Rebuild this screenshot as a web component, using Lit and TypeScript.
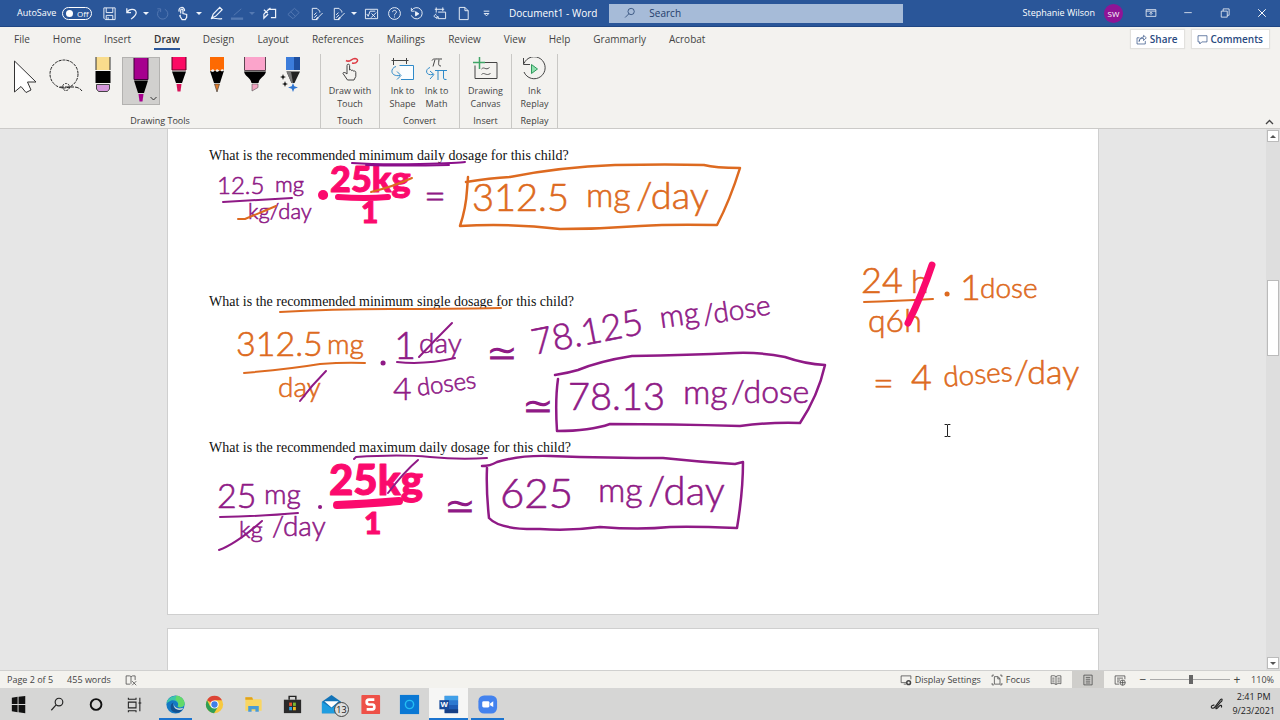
import { LitElement, html, css, svg } from "lit";
import { customElement } from "lit/decorators.js";
import { classMap } from "lit/directives/class-map.js";

const ORANGE = "#dd6a20";
const PURPLE = "#8f1a86";
const PINK = "#fb0a6d";

type Glyph = { t: string; x: number; y: number; s: number; c: string; r?: number; bold?: boolean };
type Stroke = { d: string; c: string; w: number };

const words: Glyph[] = [
  { t: "12.5", x: 217, y: 194, s: 24, c: PURPLE },
  { t: "mg", x: 275, y: 192, s: 22, c: PURPLE },
  { t: "kg/day", x: 248, y: 219, s: 22, c: PURPLE },
  { t: "25kg", x: 330, y: 192, s: 36, c: PINK, bold: true },
  { t: "1", x: 361, y: 223, s: 30, c: PINK, bold: true },
  { t: "=", x: 424, y: 209, s: 38, c: PURPLE },
  { t: "312.5", x: 472, y: 211, s: 38, c: ORANGE },
  { t: "mg", x: 586, y: 207, s: 34, c: ORANGE },
  { t: "/day", x: 636, y: 209, s: 38, c: ORANGE },

  { t: "312.5", x: 236, y: 356, s: 34, c: ORANGE },
  { t: "mg", x: 327, y: 354, s: 28, c: ORANGE },
  { t: "day", x: 278, y: 397, s: 28, c: ORANGE },
  { t: "1", x: 394, y: 359, s: 38, c: PURPLE },
  { t: "day", x: 419, y: 353, s: 28, c: PURPLE },
  { t: "4", x: 393, y: 400, s: 32, c: PURPLE },
  { t: "doses", x: 418, y: 396, s: 24, c: PURPLE, r: -8 },
  { t: "≃", x: 486, y: 366, s: 38, c: PURPLE },
  { t: "78.125", x: 534, y: 355, s: 36, c: PURPLE, r: -11 },
  { t: "mg", x: 661, y: 328, s: 30, c: PURPLE, r: -8 },
  { t: "/dose", x: 704, y: 325, s: 28, c: PURPLE, r: -9 },
  { t: "≃", x: 522, y: 419, s: 38, c: PURPLE },
  { t: "78.13", x: 568, y: 410, s: 38, c: PURPLE },
  { t: "mg", x: 683, y: 404, s: 34, c: PURPLE },
  { t: "/dose", x: 731, y: 403, s: 32, c: PURPLE },

  { t: "24", x: 861, y: 293, s: 36, c: ORANGE },
  { t: "h", x: 911, y: 293, s: 32, c: ORANGE },
  { t: "q6h", x: 868, y: 332, s: 32, c: ORANGE },
  { t: "1", x: 960, y: 300, s: 36, c: ORANGE },
  { t: "dose", x: 980, y: 298, s: 28, c: ORANGE },
  { t: "=", x: 873, y: 396, s: 36, c: ORANGE },
  { t: "4", x: 911, y: 390, s: 36, c: ORANGE },
  { t: "doses", x: 944, y: 387, s: 28, c: ORANGE, r: -5 },
  { t: "/day", x: 1014, y: 384, s: 34, c: ORANGE },

  { t: "25", x: 217, y: 508, s: 34, c: PURPLE },
  { t: "mg", x: 264, y: 504, s: 28, c: PURPLE },
  { t: "kg", x: 239, y: 538, s: 24, c: PURPLE },
  { t: "/day", x: 272, y: 536, s: 28, c: PURPLE },
  { t: "25kg", x: 329, y: 495, s: 42, c: PINK, bold: true },
  { t: "1", x: 364, y: 534, s: 30, c: PINK, bold: true },
  { t: "≃", x: 444, y: 519, s: 38, c: PURPLE },
  { t: "625", x: 500, y: 508, s: 42, c: PURPLE },
  { t: "mg", x: 598, y: 502, s: 34, c: PURPLE },
  { t: "/day", x: 648, y: 505, s: 40, c: PURPLE },
];

const strokes: Stroke[] = [
  { d: "M352 163Q380 165 420 164T465 162", c: "#8a0f8a", w: 2 },
  { d: "M366 165Q400 166 449 165", c: "#8a0f8a", w: 2 },
  { d: "M223 202Q260 200 292 198", c: PURPLE, w: 2 },
  { d: "M238 219L245 219Q262 212 276 206", c: ORANGE, w: 2 },
  { d: "M323 195h0.1", c: PINK, w: 10 },
  { d: "M338 197Q365 199 388 197", c: PINK, w: 6 },
  { d: "M371 192Q392 187 412 178", c: ORANGE, w: 2 },
  { d: "M466 182Q490 178 510 177Q560 167 615 165Q670 164 704 165Q715 168 740 168Q730 200 717 225Q670 224 640 226Q600 229 560 229Q510 223 460 226Q466 208 467 190L468 177", c: ORANGE, w: 2.5 },

  { d: "M280 312Q330 309 390 309T501 308", c: ORANGE, w: 2 },
  { d: "M244 373Q290 369 320 364Q345 362 365 363", c: ORANGE, w: 2 },
  { d: "M300 401Q312 385 326 371", c: PURPLE, w: 2 },
  { d: "M383 363h0.1", c: PURPLE, w: 5 },
  { d: "M419 357Q436 339 452 323", c: PURPLE, w: 2 },
  { d: "M397 362Q425 365 455 358", c: PURPLE, w: 2 },
  { d: "M555 375Q568 373 578 370Q600 361 632 356Q690 355 735 353Q760 352 785 357Q805 364 825 365Q818 396 800 423Q770 422 740 426Q670 424 610 424Q590 431 557 431Q555 400 558 379", c: PURPLE, w: 2.5 },

  { d: "M864 302Q895 301 933 299", c: ORANGE, w: 2 },
  { d: "M932 265Q922 295 908 323", c: PINK, w: 7 },
  { d: "M947 294h0.1", c: ORANGE, w: 5 },

  { d: "M354 459l2 -2Q400 454 430 457T487 458", c: PURPLE, w: 2 },
  { d: "M220 517Q265 516 298 513", c: PURPLE, w: 2 },
  { d: "M219 550Q236 544 262 521", c: PURPLE, w: 2 },
  { d: "M320 507h0.1", c: PURPLE, w: 4 },
  { d: "M337 505Q365 504 399 501", c: PINK, w: 8 },
  { d: "M388 493Q404 472 418 460", c: PURPLE, w: 2 },
  { d: "M482 466Q490 466 497 462Q520 455 550 456Q610 458 663 458Q700 462 735 464L743 462Q743 492 737 528Q690 526 670 527Q640 530 600 527Q570 531 540 529Q500 530 489 518Q486 490 487 468", c: PURPLE, w: 2.5 },
];

const icon = (body: unknown, size = 16, box = 16) =>
  html`<svg class="ico" width=${size} height=${size} viewBox="0 0 ${box} ${box}" aria-hidden="true">${body}</svg>`;

const chevron = svg`<path d="M1 3l3 3 3-3z" fill="currentColor" stroke="none"/>`;
const penPage = svg`<path d="M9 14.500H3.500V2.500H8.500L11.500 5.500V7M5.500 9.500L8 7M5.500 12.500L8.500 9.500M8.500 13.500L14.500 7.500M7.500 14.500L9 12l1 1z"/>`;
const inkShape = svg`<path d="M3 3.500H13M4.500 1.500V7M11.500 1.500V5.500M6.500 6.500H14.500V13.500H6.500V11M4.500 8.500C1 10 2 13 5.500 12M4.500 10l2 2-2 2"/>`;
const replay = svg`<path d="M3 4.500A6 6 0 1 1 2.500 10M2.500 2V5.500H6"/><path d="M7 6l3.500 2.300L7 10.500z" fill="currentColor"/>`;
const touch = svg`<path d="M5 8V4.500a1.200 1.200 0 0 1 2.400 0V8l4 1v3l-1.500 2.500H6.500L4 10.500 5 9.500M3.500 6A3 3 0 1 1 9 5.500" stroke-width="1.300"/>`;

const quick: Array<[string, unknown, string]> = [
  ["Save", svg`<path d="M2 2H14V14.500H3.500L2 13zM4.500 2V7H11.500V2M4.500 14.500V10H11.500V14.500M6.500 12v2.500"/>`, ""],
  ["Undo", svg`<path d="M3 2.500V7H7.500M3 7C6 2 12.500 3 13 7C13.200 9.500 11 11.500 7.500 14" stroke-width="1.300"/>`, ""],
  ["Undo history", chevron, "drop"],
  ["Repeat", svg`<path d="M10.500 3.500A5.500 5.500 0 1 1 5 4M2.500 3H6V6.500"/>`, "dim"],
  ["Touch mode", touch, ""],
  ["Touch options", chevron, "drop"],
  ["Pen", svg`<path d="M2 13.500C6 12 8 14.500 14 13.500M3 12.500L4.500 8.500 11.500 1.500 14 4 7 11z" stroke-width="1.300"/>`, ""],
  ["Ink color", svg`<path d="M1 13.500H14" stroke-width="2.500"/><path d="M4 10L12 3"/>`, "dim"],
  ["Ink color options", chevron, "drop dim"],
  ["Lasso", svg`<path d="M6 3.500H14.500V12.500H9.500M2 8.500L9 2M2 4L6 7.500M2 8.500V13L6.500 8.500" stroke-width="1.300"/>`, ""],
  ["Eraser", svg`<path d="M2 9L9 2.500 14 7 7.500 13.500zM5 6l5 5"/>`, "dim"],
  ["Ink editor", penPage, ""],
  ["Ink gestures", penPage, ""],
  ["Ink gesture options", chevron, "drop"],
  ["Ink equation", svg`<path d="M1.500 3.500H14.500V13.500H1.500zM3 8.500l1.500 2.500L6.500 5.500H12M8 8l4 4M13 7L7.500 12.500"/>`, ""],
  ["Help", svg`<circle cx="8" cy="8" r="6.300"/><path d="M6 6.500C6 4 10 4 10 6.500C10 8 8 8 8 10M8 11.200v1"/>`, ""],
  ["Ink replay", replay, ""],
  ["Ink to shape", inkShape, ""],
  ["New", svg`<path d="M3.500 1.500H9.500L13 5V14.500H3.500zM9.500 1.500V5H13"/>`, ""],
  ["Customize toolbar", svg`<path d="M5 5.500H11M5.500 8l2.500 2.500L10.500 8z"/>`, ""],
];

const tabs = ["File", "Home", "Insert", "Draw", "Design", "Layout", "References", "Mailings", "Review", "View", "Help", "Grammarly", "Acrobat"];

const tool = (body: unknown, w = 38) =>
  html`<svg class="toolart" width=${w} height="48" viewBox="0 0 ${w} 48" aria-hidden="true">${body}</svg>`;

const tools: Array<[string, unknown]> = [
  ["Eraser", svg`<path d="M12 0H26V13H12z" fill="#f9dc8c"/><path d="M12 0V13M26 0V13" stroke="#333"/><path d="M11.500 14H26.500V26H11.500z" fill="#000"/><path d="M12.500 27.500H25.500V32l-2 2.500H14.500l-2-2.500z" fill="#d597dc" stroke="#444"/>`],
  ["Purple pen", svg`<path d="M12 0H26V22H12z" fill="#a6008e"/><path d="M12 0V22.500H26V0" fill="none" stroke="#3a0033"/><path d="M12 23.500H26L22 36H16z" fill="#000"/><path d="M16.500 37H21.500L20.500 44.500H17.500z" fill="#a6008e"/><path d="M28.500 40l3 3 3-3" fill="none" stroke="#333"/>`],
  ["Pink pen", svg`<path d="M12 0H26V13H12z" fill="#fb0a64"/><path d="M12 0V13H26V0" fill="none" stroke="#5a0022"/><path d="M12 14.500H26L22 26H16z" fill="#000"/><path d="M16.500 27H21.500L20.500 34.500H17.500z" fill="#d8145a"/>`],
  ["Orange pencil", svg`<path d="M12 0H26V13l-2-1-2 2-3-2-2 2-2-2-3 2z" fill="#fd6a02"/><path d="M12 14l3 1 2-1.500 2 1.500 3-1.500 2 1 2-1L22 26H16z" fill="#000"/><path d="M16.500 27H21.500L19 35z" fill="#dd7a2a" stroke="#333" stroke-width=".6"/>`],
  ["Pink highlighter", svg`<path d="M8.500 0H29.500V13H8.500z" fill="#fba4cb"/><path d="M8.500 0V13.500H29.500V0" fill="none" stroke="#5b4650"/><path d="M8 14.500H30C29 20 23.500 20 22.500 26H15.500C14.500 20 9 20 8 14.500z" fill="#000"/><path d="M16 27H22V30.500L16 34z" fill="#f0a4c0" stroke="#555" stroke-width=".6"/>`],
  ["Galaxy pen", svg`<path d="M12 0H26V13H12z" fill="#3c7ddb"/><path d="M20 0H26V13H20z" fill="#1f4f9e"/><path d="M12.500 14.500H26L20.500 26H17.500z" fill="#222"/><path d="M12.500 14.500H17L19 26H17.500z" fill="#777"/><path d="M19 26l1.300 3.200L24 30.500l-3.700 1.300L19 35l-1.300-3.200L14 30.500l3.700-1.300z" fill="#2e74d0"/><path d="M9 17l.8 2.200 2.200.8-2.200.8L9 23l-.8-2.200L6 20l2.200-.8zM11 24l.8 2.200 2.200.8-2.200.8L11 30l-.8-2.200L8 27l2.200-.8z" fill="#111"/>`],
];

const bigShape = svg`<path d="M1.500 3.500H18.500M3.500 1V8M16.500 1V7" stroke="#444"/><path d="M9.500 8.500H23.500V22.500H11" stroke="#2f8ac9" fill="#fafdff"/><path d="M6 9.500C0 11 0 20 10 18.500M7 14.500l4 4-4 4" stroke="#2f8ac9"/>`;
const bigMath = svg`<path d="M8 3.500C9 1.500 10 2 18 2M11 2.500L9 9.500M15 2.500C14.500 7 14 9 17 9" stroke="#444"/><path d="M6 10.500C1 12 1 19 9 17.500M6 14l4 3.500-4 4.500M11 13.500H23M14 14V23M19.500 14V21Q19.500 23 22.500 22.500" stroke="#2f8ac9"/>`;
const bigCanvas = svg`<path d="M8 5.500H24V21.500H2V8.500" stroke="#444"/><path d="M8.500 12c3-3 4 2 8-1.500M8.500 17.500c3-3 4 2 9-1" stroke="#555"/><path d="M6.500 0V12M0 5.500H12" stroke="#3fa566" stroke-width="1.500"/>`;
const bigReplay = svg`<path d="M2 6.500A11 11 0 1 1 2 15M1.500 1V7.500H8" stroke="#444"/><path d="M9.500 7.500l6 4.500-6 4.500z" fill="#8fe0ae" stroke="#2f9a5c"/>`;
const bigTouch = svg`<path d="M8 3.500C12 6 13 1.500 17 1.500C22 2 19 7 14 6" stroke="#dd3b44" stroke-width="1.500"/><path d="M9 16V8.500a1.300 1.300 0 0 1 2.600 0V13c1-1 2 0 2 .6c1-.8 2 0 2 .6c1-.6 2.200 0 2.200 1.200v4L16 23H9.500L5 16.500C5 15 7 15 9 17z" stroke="#444"/>`;

const apps: Array<[string, unknown, string]> = [
  ["Start", svg`<path d="M4 5l6-1v7.500H4zM11 3.800L18 3v8.500h-7zM4 12.500h6V20l-6-1zM11 12.500h7V21l-7-1z" fill="#111"/>`, ""],
  ["Search", svg`<g fill="none" stroke="#222" stroke-width="1.200"><circle cx="12.500" cy="9.500" r="4"/><path d="M9.500 12.500L4.500 18"/></g>`, ""],
  ["Cortana", svg`<circle cx="10.500" cy="12" r="5.600" fill="none" stroke="#111" stroke-width="2"/>`, ""],
  ["Task view", svg`<path d="M3 6.500h9M3 18.500h9M3.500 9.500h8v6h-8zM15.500 5v14M14 10.500h3M3.500 5v2M11.500 5v2M3.500 18v2M11.500 18v2" fill="none" stroke="#222" stroke-width="1.100"/>`, ""],
  ["Edge", svg`<circle cx="12" cy="12" r="9.500" fill="#1479c4"/><path d="M2.600 11C4 1 20 0 21.500 11C21.500 15 16 16 14 14C17 10 11 6 7 8C5 9 3 10 2.600 11z" fill="#3ec7a8"/><path d="M13 2.600C18 3 21.500 7 21.500 11C21.500 14.500 17 15.500 14.500 14.300C16 11 14 8 12 7z" fill="#63d968"/><path d="M10 10C8 13 11 19 19 17.500C16 22 8 21.500 7 16C6.500 12.500 8 10.500 10 10z" fill="#14508f"/><path d="M10.500 10.500C9.500 14 13 17.500 20 15.500L19 17.300C13 19 9 15 10.500 10.500z" fill="#d6d6d5"/>`, "open"],
  ["Chrome", svg`<circle cx="12" cy="12" r="9" fill="#f7c93e"/><path d="M12 12L4.200 7.500A9 9 0 0 1 19.800 7.500H12z" fill="#dc4437"/><path d="M12 12L7.500 14 4.200 7.500A9 9 0 0 0 11.500 21L15.500 14.500z" fill="#2f9e55"/><circle cx="12" cy="12" r="4.300" fill="#fff"/><circle cx="12" cy="12" r="3.300" fill="#3f7fe8"/>`, ""],
  ["File Explorer", svg`<path d="M3.500 4.500h7l1.500 2H19a1.500 1.500 0 0 1 1.500 1.500v10.500H3.500z" fill="#f9d662"/><path d="M3.500 4.500h7l1 2.500h-8z" fill="#e0a21d"/><path d="M6.500 19.500v-6h11v6h-3.500V17h-4v2.500z" fill="#4a9bd6"/>`, ""],
  ["Store", svg`<path d="M8.500 7V3.500h7V7" fill="none" stroke="#222" stroke-width="1.500"/><path d="M3 7h18v14H3z" fill="#2b2a2a"/><path d="M8.500 10h3v3.500h-3z" fill="#e8542e"/><path d="M12.500 10h3v3.500h-3z" fill="#7db82e"/><path d="M8.500 14.500h3V18h-3z" fill="#2ea2e0"/><path d="M12.500 14.500h3V18h-3z" fill="#f3b921"/>`, ""],
  ["Mail", svg`<path d="M2 9L12 2l10 7v12H2z" fill="#1374b8"/><path d="M4.500 8.500h15L12 15z" fill="#fff"/><path d="M2 9l10 7 10-7v12H2z" fill="#1f9de0"/>`, "mail"],
  ["Snagit", svg`<rect x="2.500" y="2" width="19.500" height="20" rx="1" fill="#ee5148"/><path d="M16 7H10.500Q8 7 8 9.500Q8 12 10.500 12H14Q16 12 16 14.500Q16 17 14 17H8" fill="none" stroke="#fff" stroke-width="2.800"/>`, ""],
  ["Alexa", svg`<path d="M2 2h20v20h-20z" fill="#0a78d4"/><circle cx="12" cy="12" r="4.300" fill="none" stroke="#25bff2" stroke-width="1.500"/>`, ""],
  ["Word", svg`<path d="M8 3h14v18H8z" fill="#1e5bb5"/><path d="M8 3h14v5H8z" fill="#41a0e8"/><path d="M8 8h14v4.500H8z" fill="#2c78d0"/><path d="M8 17h14v4H8z" fill="#163f86"/><path d="M2.500 7.500h10v9.500h-10z" fill="#17499a"/><text x="7.500" y="15" text-anchor="middle" font-size="8" font-weight="700" fill="#fff">W</text>`, "open current"],
  ["Zoom", svg`<rect x="2.500" y="2.500" width="19.500" height="19" rx="6" fill="#4382ee"/><rect x="6.500" y="8.500" width="7.500" height="6.500" rx="1.500" fill="#fff"/><path d="M14.700 11l3.300-2.300v6L14.700 12.700z" fill="#fff"/>`, "open"],
];

@customElement("app-root")
export class AppRoot extends LitElement {
  static styles = css`
    :host {
      display: flex;
      flex-direction: column;
      height: 100vh;
      overflow: hidden;
      background: #e6e6e6;
      color: #444;
      font: 10px/14px "Open Sans", "Noto Sans", sans-serif;
    }
    * { box-sizing: border-box; }
    button, input { font: inherit; color: inherit; border: 0; background: none; padding: 0; margin: 0; }
    button { display: flex; align-items: center; justify-content: center; white-space: nowrap; }
    svg { flex: none; display: block; }
    .ico { fill: none; stroke: currentColor; }

    .title { display: flex; align-items: center; height: 27px; flex: none; background: #2a5699; color: #fff; border-bottom: 1px solid #1f4684; }
    .auto { display: flex; align-items: center; gap: 6px; width: 97px; padding-left: 17px; font-size: 9px; flex: none; }
    .toggle { width: 30px; height: 13px; border: 1px solid #fff; border-radius: 7px; font-size: 8px; line-height: 11px; gap: 4px; }
    .knob { width: 7px; height: 7px; border-radius: 50%; background: #fff; }
    .quick { display: grid; flex: none; grid-template-columns: 24px 20px 10px 22px 20px 12px 22px 20px 10px 24px 24px 22px 22px 10px 24px 22px 22px 24px 24px 22px; color: #eef3fb; }
    .dim { color: #5479b2; }
    .name { padding: 0 12px; white-space: nowrap; }
    .search { display: flex; align-items: center; gap: 13px; flex: 0 1 294px; min-width: 0; height: 19px; padding-left: 15px; background: #a6bbd8; color: #1e3c6b; }
    .search input { flex: 1; min-width: 0; outline: 0; }
    .search input::placeholder { color: #1e3c6b; opacity: 1; }
    .user { display: flex; align-items: center; gap: 9px; margin-left: auto; white-space: nowrap; font-size: 9px; }
    .avatar { width: 19px; height: 19px; border-radius: 50%; background: #8f1496; font-size: 8px; line-height: 19px; text-align: center; }
    .window { display: grid; grid-template-columns: repeat(4, 37px); padding-left: 9px; }

    .tabs { display: flex; align-items: flex-start; height: 27px; flex: none; background: #f3f2ef; padding: 3px 11px 0 14px; }
    .tablist { display: flex; gap: 23px; margin-right: auto; }
    .tab { height: 20px; border-bottom: 2px solid transparent; }
    .tab.on { border-color: #2a5699; color: #333; font-weight: 600; }
    .actions { display: flex; gap: 8px; color: #2a4a80; font-weight: 600; }
    .actions button { height: 18px; gap: 3px; padding: 0 6px 0 5px; background: #fff; box-shadow: 0 0 1px 1px #e2e1de; }

    .ribbon { display: flex; height: 75px; flex: none; background: #f3f2ef; border-bottom: 1px solid #cbcac8; font-size: 9px; line-height: 13px; }
    .group { display: flex; flex-direction: column; align-items: center; justify-content: space-between; height: 74px; padding: 3px 5px 0; border-right: 1px solid #c9c8c5; }
    .group.draw { width: 321px; padding: 3px 4px 0; align-items: stretch; }
    .group.touch { width: 59px; }
    .group.convert { width: 80px; }
    .group.insert { width: 52px; }
    .group.replay { width: 46px; }
    .caption { text-align: center; line-height: 14px; white-space: nowrap; color: #3a3a3a; }
    .row { display: flex; justify-content: center; }
    .tools { display: flex; }
    .pick { width: 40px; height: 48px; }
    .pen { width: 38px; height: 48px; }
    .pen.on { background: #d1d0ce; outline: 1px solid #b3b2b0; outline-offset: -1px; }
    .big { flex-direction: column; gap: 2px; min-width: 34px; white-space: pre-line; }
    .collapse { margin: auto 6px 1px auto; }

    .work { display: flex; flex: 1; min-height: 0; overflow: hidden; }
    .pages { flex: 1; min-width: 0; display: flex; flex-direction: column; align-items: center; gap: 13px; overflow: hidden; }
    .sheet { position: relative; flex: none; width: 100%; max-width: 932px; height: 486px; padding: 18px 41px; background: #fff; border: 1px solid #cfcfcf; border-top: 0; }
    .sheet.next { border-top: 1px solid #cfcfcf; }
    .sheet p { margin: 0 0 128px; font: 14px/18px "Liberation Serif", serif; color: #111; }
    .ink { position: absolute; top: 0; left: -1px; font-family: Lato, sans-serif; font-weight: 300; }
    .ink path { fill: none; stroke-linecap: round; stroke-linejoin: round; }
    .ink .bold { font-weight: 900; }

    .scroll { display: flex; flex-direction: column; width: 14px; flex: none; padding: 1px; background: #dedede; }
    .scroll button { height: 12px; background: #fff; border: 1px solid #bbb; color: #555; }
    .track { display: grid; flex: 1; grid-template-rows: 138fr 76fr 301fr; }
    .thumb { grid-row: 2; background: #fff; border: 1px solid #bbb; }

    .status { display: flex; align-items: center; justify-content: space-between; height: 18px; flex: none; background: #f3f2ee; border-top: 1px solid #d0d0cf; font-size: 9px; padding: 0 6px 0 7px; }
    .side { display: flex; align-items: center; height: 100%; }
    .side.left { gap: 14px; }
    .side.right button { gap: 3px; height: 17px; }
    .side.right .label { margin-right: 10px; }
    .side.right .view { width: 32px; }
    .side.right .view.on { background: #cfcecb; }
    .side.right .step { width: 14px; font-size: 12px; }
    .zoom { appearance: none; width: 80px; height: 12px; background: linear-gradient(#aaa, #aaa) center / 100% 1px no-repeat; }
    .zoom::-webkit-slider-thumb { appearance: none; width: 4px; height: 9px; background: #666; }
    .percent { width: 30px; text-align: right; }

    .taskbar { display: flex; align-items: center; height: 32px; flex: none; background: #d6d6d5; }
    .app { position: relative; width: 39px; height: 32px; }
    .app.open::after { content: ""; position: absolute; left: 3px; right: 3px; bottom: 0; height: 2px; background: #1c74cf; }
    .app.current { background: #f6f6f5; }
    .app.current::after { left: 0; right: 0; }
    .badge { position: absolute; right: 2px; bottom: 3px; width: 15px; height: 15px; border: 1px solid #444; border-radius: 50%; background: #dededd; color: #111; font-size: 9px; line-height: 13px; text-align: center; }
    .tray { display: flex; align-items: center; gap: 8px; margin-left: auto; padding-right: 5px; color: #222; text-align: center; font-size: 9px; line-height: 14px; }
  `;

  private renderTitle() {
    return html`<header class="title">
      <div class="auto"><span>AutoSave</span><button class="toggle" role="switch" aria-checked="false" aria-label="AutoSave"><span class="knob"></span>Off</button></div>
      <nav class="quick" aria-label="Quick access">
        ${quick.map(([label, art, cls]) => html`<button class=${cls} aria-label=${label}>${cls.includes("drop") ? icon(art, 8, 8) : icon(art, 15)}</button>`)}
      </nav>
      <span class="name">Document1 - Word</span>
      <label class="search" aria-label="Search">${icon(svg`<circle cx="9.500" cy="6" r="4.200"/><path d="M6.500 9L1.500 14"/>`, 12)}<input type="text" placeholder="Search" /></label>
      <div class="user"><span>Stephanie Wilson</span><span class="avatar">SW</span></div>
      <div class="window">
        <button aria-label="Ribbon display options">${icon(svg`<path d="M1.500 3.500H14.500V12.500H1.500zM1.500 5.500H14.500M8 11V7M6 9l2-2 2 2"/>`, 12)}</button>
        <button aria-label="Minimize">${icon(svg`<path d="M3 7.500H13"/>`, 12)}</button>
        <button aria-label="Restore">${icon(svg`<path d="M3 5.500H11V13.500H3zM5.500 5.500V2.500H13.500V11H11"/>`, 12)}</button>
        <button aria-label="Close">${icon(svg`<path d="M3 3L13 13M13 3L3 13" stroke-width="1.300"/>`, 12)}</button>
      </div>
    </header>`;
  }

  private renderTabs() {
    return html`<div class="tabs">
      <nav class="tablist">${tabs.map((t) => html`<button class=${classMap({ tab: true, on: t === "Draw" })}>${t}</button>`)}</nav>
      <div class="actions">
        <button>${icon(svg`<path d="M5 5.500H1.500V14.500H13.500V10M4.500 11C5 7 8 6 11 6.500V9.500L15 5.500 11 2V4.500C7 4.500 4.500 7 4.500 11z"/>`, 11)}Share</button>
        <button>${icon(svg`<path d="M1.500 2.500H14.500V11.500H7L4 14.500V11.500H1.500z"/>`, 11)}Comments</button>
      </div>
    </div>`;
  }

  private renderRibbon() {
    const big = (label: string, art: unknown) => html`<button class="big">${icon(art, 25, 25)}<span>${label}</span></button>`;
    return html`<section class="ribbon">
      <div class="group draw">
        <div class="tools">
          <button class="pick" aria-label="Select">${tool(svg`<path d="M10.500 4V35L17 29.500 22 35.500 27 33 23.500 25H32z" fill="#fff" stroke="#333"/>`, 40)}</button>
          <button class="pick" aria-label="Lasso select">${tool(svg`<g fill="none" stroke="#222"><circle cx="20" cy="17" r="14" stroke-dasharray="3 1"/><circle cx="22" cy="30" r="3.500" stroke-dasharray="2 1"/><path d="M16 30H30Q35 30 38 34" stroke-dasharray="4 1"/></g>`, 40)}</button>
          ${tools.map(([label, art], i) => html`<button class=${classMap({ pen: true, on: i === 1 })} aria-label=${label}>${tool(art)}</button>`)}
        </div>
        <div class="caption">Drawing Tools</div>
      </div>
      <div class="group touch"><div class="row">${big("Draw with\nTouch", bigTouch)}</div><div class="caption">Touch</div></div>
      <div class="group convert"><div class="row">${big("Ink to\nShape", bigShape)}${big("Ink to\nMath", bigMath)}</div><div class="caption">Convert</div></div>
      <div class="group insert"><div class="row">${big("Drawing\nCanvas", bigCanvas)}</div><div class="caption">Insert</div></div>
      <div class="group replay"><div class="row">${big("Ink\nReplay", bigReplay)}</div><div class="caption">Replay</div></div>
      <button class="collapse" aria-label="Collapse ribbon">${icon(svg`<path d="M1 6l3.500-3.500L8 6" stroke-width="1.300"/>`, 9, 9)}</button>
    </section>`;
  }

  private renderInk() {
    const edge = (g: Glyph) => (g.t === "≃" ? 0 : g.bold ? 1 : 0.6);
    const word = (g: Glyph) => svg`<text class=${g.bold ? "bold" : ""} x=${g.x} y=${g.y} font-size=${g.s} fill=${g.c} stroke=${g.c} stroke-width=${edge(g)} stroke-linejoin="round" transform=${`rotate(${g.r ?? 0} ${g.x} ${g.y})`}>${g.t}</text>`;
    return html`<svg class="ink" width="932" height="485" viewBox="167 129 932 485">
      ${words.map(word)}
      ${strokes.map((k) => svg`<path d=${k.d} stroke=${k.c} stroke-width=${k.w} />`)}
      <path d="M945 424.500h2l.5.500.5-.500h2M947.500 425v11M945 436.500h2l.5-.500.5.500h2" stroke="#222" stroke-width="1" />
    </svg>`;
  }

  private renderDocument() {
    return html`<main class="work">
      <div class="pages">
        <article class="sheet">
          <p>What is the recommended minimum daily dosage for this child?</p>
          <p>What is the recommended minimum single dosage for this child?</p>
          <p>What is the recommended maximum daily dosage for this child?</p>
          ${this.renderInk()}
        </article>
        <article class="sheet next"></article>
      </div>
      <div class="scroll">
        <button aria-label="Scroll up">${icon(svg`<path d="M1 6l3-3 3 3z" fill="currentColor" stroke="none"/>`, 8, 8)}</button>
        <div class="track"><div class="thumb"></div></div>
        <button aria-label="Scroll down">${icon(chevron, 8, 8)}</button>
      </div>
    </main>`;
  }

  private renderStatus() {
    return html`<footer class="status">
      <div class="side left"><span>Page 2 of 5</span><span>455 words</span>
        <button aria-label="Proofing">${icon(svg`<path d="M6 2.500H1.500V13.500H7M8 4V13M8 4Q9 2.500 10 2.500H13.500V8M6 2.500Q8 2.500 8 4M9.500 9.500L15 15M15 9.500L9.500 15"/>`, 12)}</button>
      </div>
      <div class="side right">
        <button class="label">${icon(svg`<path d="M8 11.500H1.500V2.500H14.500V7M5 13.500H8"/><circle cx="11.500" cy="11.500" r="2.500" stroke-width="2"/>`, 12)}Display Settings</button>
        <button class="label">${icon(svg`<path d="M4.500 3.500H9L12 6V13.500H4.500zM9 3.500V6.500H12M1.500 4V1.500H4M12 1.500H14.500V4M1.500 12V14.500H4M12 14.500H14.500V12"/>`, 12)}Focus</button>
        <button class="view" aria-label="Read mode">${icon(svg`<path d="M8 3.500C6 2 4 2 1.500 2.500V13C4 12.500 6 12.500 8 14C10 12.500 12 12.500 14.500 13V2.500C12 2 10 2 8 3.500V14M3 5.500h3M3 8h3M3 10.500h3M10 5.500h3M10 8h3M10 10.500h3"/>`, 12)}</button>
        <button class="view on" aria-label="Print layout">${icon(svg`<path d="M2.500 1.500H13.500V14.500H2.500zM5 4.500H11M5 7H11M5 9.500H11M5 12H11"/>`, 12)}</button>
        <button class="view" aria-label="Web layout">${icon(svg`<path d="M7 13.500H1.500V2.500H14.500V7M4 5.500H12M4 8H8M4 10.500H7"/><circle cx="11.500" cy="11.500" r="3.500"/><path d="M8 11.500H15M11.500 8V15"/>`, 12)}</button>
        <button class="step" aria-label="Zoom out">−</button>
        <input class="zoom" type="range" min="0" max="100" value="51" aria-label="Zoom" />
        <button class="step" aria-label="Zoom in">+</button>
        <span class="percent">110%</span>
      </div>
    </footer>`;
  }

  private renderTaskbar() {
    return html`<footer class="taskbar">
      ${apps.map(([label, art, cls]) => html`<button class="app ${cls}" aria-label=${label}>
        <svg width="23" height="23" viewBox="0 0 24 24" aria-hidden="true">${art}</svg>
        ${cls === "mail" ? html`<span class="badge">13</span>` : ""}
      </button>`)}
      <div class="tray">
        ${icon(svg`<path d="M2 10C0 13 4 14 6 11L12 3C14 1 15 4 12 6L7 12C6 14 8 14 10 11C12 9 14 9 13 12M2 10L5 9" stroke-width="1.300"/>`, 14)}
        <time>2:41 PM<br />9/23/2021</time>
      </div>
    </footer>`;
  }

  render() {
    return html`${this.renderTitle()}${this.renderTabs()}${this.renderRibbon()}${this.renderDocument()}${this.renderStatus()}${this.renderTaskbar()}`;
  }
}
